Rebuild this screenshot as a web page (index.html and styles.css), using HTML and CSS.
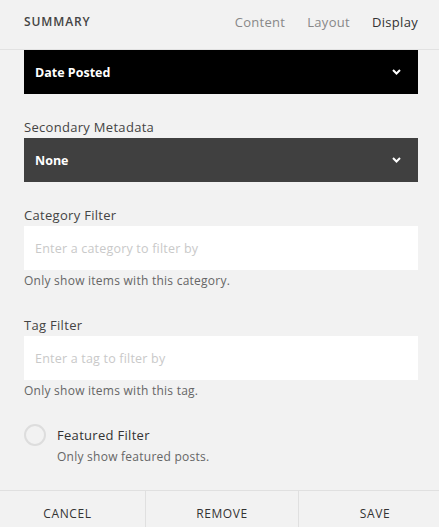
FILE: index.html
```html
<!DOCTYPE html>
<html>
<head>
<meta charset="utf-8">
<link rel="stylesheet" href="styles.css">
</head>
<body>
<div class="panel">
  <header class="header">
    <div class="title">SUMMARY</div>
    <nav class="tabs">
      <span class="tab">Content</span>
      <span class="tab">Layout</span>
      <span class="tab active">Display</span>
    </nav>
  </header>
  <main class="body">
    <div class="select black">
      <span>Date Posted</span>
      <svg class="chev" width="9" height="6" viewBox="0 0 9 6"><path d="M1 1 L4.5 4.5 L8 1" fill="none" stroke="#fff" stroke-width="2"/></svg>
    </div>
    <div class="field">
      <div class="label">Secondary Metadata</div>
      <div class="select gray">
        <span>None</span>
        <svg class="chev" width="9" height="6" viewBox="0 0 9 6"><path d="M1 1 L4.5 4.5 L8 1" fill="none" stroke="#fff" stroke-width="2"/></svg>
      </div>
    </div>
    <div class="field">
      <div class="label">Category Filter</div>
      <div class="input">Enter a category to filter by</div>
      <div class="help">Only show items with this category.</div>
    </div>
    <div class="field after-help">
      <div class="label">Tag Filter</div>
      <div class="input">Enter a tag to filter by</div>
      <div class="help">Only show items with this tag.</div>
    </div>
    <div class="check">
      <span class="circle"></span>
      <div class="check-text">
        <div class="check-label">Featured Filter</div>
        <div class="help">Only show featured posts.</div>
      </div>
    </div>
  </main>
  <footer class="footer">
    <div class="btn cancel">CANCEL</div>
    <div class="btn remove">REMOVE</div>
    <div class="btn save">SAVE</div>
  </footer>
</div>
</body>
</html>
```
FILE: styles.css
```css
* { box-sizing: border-box; }
html, body { margin: 0; padding: 0; }
body {
  background: #f2f2f2;
  font-family: "Open Sans", "Liberation Sans", sans-serif;
  color: #333;
  width: 439px;
  height: 527px;
  overflow: hidden;
}
.header {
  height: 50px;
  border-bottom: 1px solid #e2e2e2;
  display: flex;
  align-items: center;
  justify-content: space-between;
  padding: 0 21px 0 24px;
}
.title {
  font-size: 12px;
  font-weight: 600;
  letter-spacing: 0.9px;
  color: #444;
  margin-top: -6px;
}
.tabs {
  display: flex;
  gap: 22px;
  margin-top: -6px;
}
.tab {
  font-size: 13px;
  color: #888;
  letter-spacing: 0.3px;
}
.tab.active { color: #333; }
.body {
  padding: 0 21px 0 24px;
}
.select {
  height: 44px;
  display: flex;
  align-items: center;
  justify-content: space-between;
  padding: 0 17px 0 11px;
  color: #fff;
  font-size: 12.5px;
  font-weight: 700;
}
.black { background: #000; }
.gray { background: #404040; }
.field { margin-top: 24px; }
.field.after-help { margin-top: 27px; }
.label {
  font-size: 13px;
  color: #444;
  height: 20px;
  line-height: 18px;
  letter-spacing: 0.3px;
}
.input {
  height: 44px;
  background: #fff;
  color: #c9c9c9;
  font-size: 12.5px;
  display: flex;
  align-items: center;
  padding-left: 11px;
  letter-spacing: 0.2px;
}
.help {
  font-size: 12px;
  line-height: 16px;
  color: #666;
  margin-top: 3px;
  letter-spacing: 0.25px;
}
.check {
  display: flex;
  margin-top: 25px;
  gap: 11px;
}
.circle {
  width: 22px;
  height: 22px;
  border-radius: 50%;
  border: 2px solid #ddd;
  flex: none;
}
.check-label {
  font-size: 13px;
  color: #333;
  line-height: 22px;
  letter-spacing: 0.3px;
}
.check-text .help { margin-top: 3px; }
.footer {
  position: absolute;
  left: 0;
  top: 490px;
  width: 439px;
  height: 50px;
  border-top: 1px solid #e0e0e0;
  display: grid;
  grid-template-columns: 145px 153px 1fr;
}
.btn {
  display: flex;
  justify-content: center;
  padding-top: 14px;
  font-size: 12px;
  letter-spacing: 0.6px;
  color: #333;
}
.btn + .btn { border-left: 1px solid #e0e0e0; }
.cancel { padding-right: 10px; }
.save { padding-left: 12px; }
```
